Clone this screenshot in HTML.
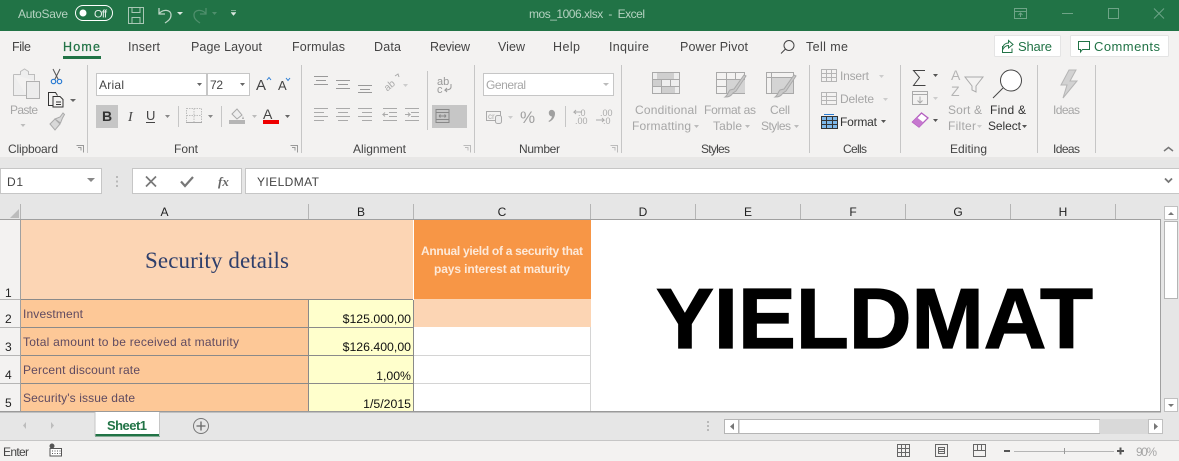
<!DOCTYPE html>
<html><head><meta charset="utf-8"><style>
html,body{margin:0;padding:0;background:#f3f2f1}
svg{display:block;font-family:"Liberation Sans",sans-serif;font-size:12px}
text{white-space:pre}
.g{fill:#a6a6a6}.d{fill:#333}.m{fill:#444}.c{text-anchor:middle}.e{text-anchor:end}
.s{fill:none;stroke:#a9a9a9;stroke-width:1}.k{fill:none;stroke:#444;stroke-width:1}
.l{fill:#b0b0b0}
.h{font-size:12px;fill:#222}
.tb{font-size:12.5px}
</style></head><body>
<svg width="1179" height="461" viewBox="0 0 1179 461" xmlns="http://www.w3.org/2000/svg">
<rect width="1179" height="461" fill="#f3f2f1"/>
<!-- title bar -->
<rect width="1179" height="31" fill="#217346"/>
<text x="18" y="18" fill="#b5d2c1" textLength="50">AutoSave</text>
<rect x="75.500" y="5.500" width="37" height="15" rx="7.500" fill="none" stroke="#fff"/>
<circle cx="83" cy="13" r="3.500" fill="#fff"/>
<text x="94" y="17.500" fill="#e6f0ea" font-size="11" textLength="13">Off</text>
<path d="M128.500 7.500h15v16h-15zM132 7.500v5h8v-5M132 23.500v-6h8v6" fill="none" stroke="#a9c8b6"/>
<path d="M159 8v6h6M159 14c3-5 12-5 12 1 0 4-3 6-6 8" fill="none" stroke="#bcd5c6" stroke-width="1.300"/>
<path d="M177 12h6l-3 3z" fill="#dbe8e0"/>
<path d="M206 8v6h-6M206 14c-3-5-12-5-12 1 0 4 3 6 6 8" fill="none" stroke="#4f8f6c" stroke-width="1.300"/>
<path d="M212 12h5l-2.500 3z" fill="#4f8f6c"/>
<path d="M231 10.500h5M231 12.500h5l-2.500 3z" fill="#dbe8e0" stroke="#dbe8e0" stroke-width=".5"/>
<text x="529" y="18" fill="#b5d2c1" textLength="116">mos_1006.xlsx  -  Excel</text>
<path d="M1014.500 8.500h12v10h-12zM1014.500 11.500h12M1020.500 17v-4M1018.500 15l2-2 2 2" fill="none" stroke="#6ea487"/>
<path d="M1062 13.500h11" stroke="#6ea487"/>
<rect x="1108.500" y="8.500" width="10" height="10" fill="none" stroke="#6ea487"/>
<path d="M1154 8.500l10 10M1164 8.500l-10 10" stroke="#6ea487"/>
<!-- tabs -->
<g class="m tb">
<text x="12" y="51" textLength="19">File</text>
<text x="128" y="51" textLength="32">Insert</text>
<text x="191" y="51" textLength="71">Page Layout</text>
<text x="292" y="51" textLength="53">Formulas</text>
<text x="374" y="51" textLength="27">Data</text>
<text x="430" y="51" textLength="40">Review</text>
<text x="498" y="51" textLength="27">View</text>
<text x="553" y="51" textLength="27">Help</text>
<text x="609" y="51" textLength="40">Inquire</text>
<text x="680" y="51" textLength="68">Power Pivot</text>
<text x="806" y="51" textLength="42">Tell me</text>
</g>
<text x="63" y="51" fill="#217346" class="tb" textLength="37" stroke="#217346" stroke-width=".25">Home</text>
<rect x="63" y="56" width="38" height="3" fill="#217346"/>
<circle cx="789" cy="45.500" r="5" fill="none" stroke="#444"/><path d="M785.500 49l-4.500 4.500" fill="none" stroke="#444"/>
<rect x="994.500" y="35.500" width="66" height="21" rx="1" fill="#fff" stroke="#e4e4e4"/>
<path d="M1002.500 46v6.500h9.500v-4M1002.500 48c1-4 4-5 6-5v-2.500l4.500 4-4.500 3.500v-2.500c-2 0-4 .5-6 4.500" fill="none" stroke="#217346"/>
<text x="1018" y="51" fill="#217346" font-size="13" textLength="34">Share</text>
<rect x="1070.500" y="35.500" width="98" height="21" rx="1" fill="#fff" stroke="#e4e4e4"/>
<path d="M1078.500 41.500h11v8h-7l-2 2.500v-2.500h-2z" fill="none" stroke="#217346"/>
<text x="1094" y="51" fill="#217346" font-size="13" textLength="66">Comments</text>
<!-- ribbon bottom -->
<rect y="157" width="1179" height="3" fill="#e8e7e6"/>
<!-- separators -->
<g fill="#c6c6c6">
<rect x="87" y="65" width="1" height="88"/><rect x="301" y="65" width="1" height="88"/>
<rect x="427" y="71" width="1" height="59"/><rect x="474" y="65" width="1" height="88"/>
<rect x="621" y="65" width="1" height="88"/><rect x="809" y="65" width="1" height="88"/>
<rect x="900" y="65" width="1" height="88"/><rect x="1037" y="65" width="1" height="88"/>
<rect x="1095" y="65" width="1" height="88"/>
<rect x="178" y="106" width="1" height="21"/><rect x="221" y="106" width="1" height="21"/><rect x="565" y="106" width="1" height="21"/>
</g>
<!-- group labels -->
<g class="m">
<text x="8" y="153" textLength="50">Clipboard</text>
<text x="174" y="153" textLength="24">Font</text>
<text x="353" y="153" textLength="53">Alignment</text>
<text x="519" y="153" textLength="41">Number</text>
<text x="701" y="153" textLength="29">Styles</text>
<text x="843" y="153" textLength="24">Cells</text>
<text x="950" y="153" textLength="37">Editing</text>
<text x="1053" y="153" textLength="27">Ideas</text>
</g>
<path d="M76.500 145.500h7v7M78 147.500h3v3" fill="none" stroke="#999"/>
<path d="M290.500 145.500h7v7M292 147.500h3v3" fill="none" stroke="#999"/>
<path d="M463.500 145.500h7v7M465 147.500h3v3" fill="none" stroke="#bbb"/>
<path d="M610.500 145.500h7v7M612 147.500h3v3" fill="none" stroke="#bbb"/>
<path d="M1164 151l4.500-3.500 4.500 3.500" fill="none" stroke="#777" stroke-width="1.500"/>
<!-- clipboard -->
<path d="M13.500 74.500h7v-3l4-2.500 4 2.500v3h6v6" fill="#eee" stroke="#bdbdbd"/>
<path d="M13.500 74.500v21h13" fill="#eee" stroke="#bdbdbd"/>
<rect x="26.500" y="81.500" width="13" height="17" fill="#ececec" stroke="#b0b0b0"/>
<text x="10" y="114" class="g" textLength="28">Paste</text>
<path d="M20.500 124h5l-2.500 3z" fill="#bdbdbd"/>
<path d="M53 69l5.500 11M60 69l-5.500 11" stroke="#555" fill="none"/>
<circle cx="53.500" cy="81.500" r="2.200" fill="none" stroke="#2b7cd3" stroke-width="1.200"/><circle cx="59.500" cy="81.500" r="2.200" fill="none" stroke="#2b7cd3" stroke-width="1.200"/>
<path d="M53 105.500h-4.500v-13h7l2 3M53 96.500h7l3 3v7.500h-10z" fill="none" stroke="#333"/>
<path d="M56 102h5M56 104.500h5" stroke="#333"/>
<path d="M70 99h6l-3 3z" fill="#666"/>
<path d="M50 124l5-5 5 5-5 6zM55 119l5-2 3-4 1.500 1.500-2 3.500-2 5z" fill="#d8d8d8" stroke="#aaa"/>
<!-- font -->
<rect x="96.500" y="73.500" width="110" height="22" fill="#fff" stroke="#c6c6c6"/>
<rect x="207.500" y="73.500" width="42" height="22" fill="#fff" stroke="#c6c6c6"/>
<text x="99" y="89" class="m" textLength="25">Arial</text>
<text x="210" y="89" class="m" textLength="13">72</text>
<path d="M197 83h5l-2.500 3zM240 83h5l-2.500 3z" fill="#666"/>
<text x="256" y="90" class="m" font-size="15">A</text><path d="M267 80l2-2.500 2 2.500" fill="none" stroke="#2b7cd3"/>
<text x="278" y="90" class="m" font-size="13">A</text><path d="M286 78l2 2.500 2-2.500" fill="none" stroke="#2b7cd3"/>
<rect x="96" y="105" width="22" height="23" fill="#c6c6c6"/>
<text x="107" y="121" class="c" fill="#333" font-weight="bold" font-size="14">B</text>
<text x="128" y="121" fill="#444" font-style="italic" font-size="14" font-family="Liberation Serif">I</text>
<text x="146" y="120" fill="#444" font-size="13">U</text><rect x="146" y="122" width="9" height="1" fill="#444"/>
<path d="M165 115h5l-2.500 3zM208 115h5l-2.500 3z" fill="#888"/><path d="M252 115h5l-2.500 3z" fill="#bbb"/><path d="M285 115h5l-2.500 3z" fill="#666"/>
<path d="M186.500 108.500h15v14h-15zM194 108.500v14M186.500 115.500h15" fill="none" stroke="#bdbdbd" stroke-dasharray="1.500 1"/>
<rect x="186" y="122" width="16" height="1" fill="#aaa"/>
<path d="M232 114l5-5 5 6-5 4z" fill="#eee" stroke="#aaa"/><path d="M243 116l1 3-2 0z" fill="#aaa"/>
<rect x="229" y="120" width="16" height="4" fill="#b5b5b5"/>
<text x="263" y="119" font-size="14" fill="#444">A</text><rect x="263" y="120" width="16" height="4" fill="#e00"/>
<!-- alignment -->
<path d="M314 76.500h14M316 80.500h10M314 84.500h14M336 80.500h14M338 84.500h10M336 88.500h14M358 85.500h14M360 89.500h10M358 92.500h14" stroke="#999"/>
<path d="M314 108.500h14M314 112.500h10M314 116.500h14M314 120.500h10M336 108.500h14M338 112.500h10M336 116.500h14M338 120.500h10M358 108.500h14M362 112.500h10M358 116.500h14M362 120.500h10M383 108.500h14M389 112.500h8M389 116.500h8M383 120.500h14M405 108.500h14M411 112.500h8M411 116.500h8M405 120.500h14" stroke="#aaa"/>
<path d="M388 114.500h-5l2-2M383 114.500l2 2M405 114.500h5l-2-2M410 114.500l-2 2" fill="none" stroke="#aaa"/>
<text x="383" y="88" font-size="10" fill="#aaa" transform="rotate(-40 390 84)">ab</text><path d="M395 76l3-2 1 3" fill="none" stroke="#aaa"/>
<path d="M403 84h5l-2.500 3z" fill="#ccc"/>
<text x="437" y="85" font-size="11" fill="#999">ab</text>
<text x="437" y="93" font-size="11" fill="#999">c</text>
<path d="M451 84v3c0 2-2 3-6 3l2-2M445 90l2 2" fill="none" stroke="#999"/>
<rect x="432" y="105" width="35" height="23" fill="#c6c6c6"/>
<path d="M436 109.500h13v13h-13zM436 112.500h13M436 119.500h13M439 116h7M439 116l1.500-1.500M439 116l1.500 1.500M446 116l-1.500-1.500M446 116l-1.500 1.500" fill="none" stroke="#888"/>
<!-- number -->
<rect x="483.500" y="73.500" width="130" height="22" fill="#fff" stroke="#c6c6c6"/>
<text x="486" y="89" class="g" textLength="40">General</text>
<path d="M603 83h6l-3 3z" fill="#bbb"/>
<path d="M486.500 111.500h14v9h-14z" fill="none" stroke="#aaa"/>
<text x="488" y="119" font-size="8" fill="#aaa">cr</text>
<rect x="495.500" y="115.500" width="6" height="8" rx="2" fill="#eee" stroke="#aaa"/>
<path d="M508 116h5l-2.500 3z" fill="#ccc"/>
<text x="520" y="123" font-size="17" fill="#a0a0a0">%</text>
<path d="M550.500 110a3.500 3.500 0 0 1 4.500 3.500c0 4-2.500 7-6 8.500l-.5-1c2-1 3.200-3 3.500-4.500a3.500 3.500 0 0 1-1.500-6.500z" fill="#a0a0a0"/>
<text x="578" y="116" font-size="9" fill="#aaa">.0</text><text x="575" y="124" font-size="9" fill="#aaa">.00</text>
<path d="M582 112h-8l2-2M574 112l2 2" fill="none" stroke="#aaa"/>
<text x="600" y="116" font-size="9" fill="#aaa">.00</text><text x="603" y="124" font-size="9" fill="#aaa">.0</text>
<path d="M596 120h8l-2-2M604 120l-2 2" fill="none" stroke="#aaa"/>
<!-- styles -->
<rect x="652.500" y="72.500" width="27" height="21" fill="#eee" stroke="#a9a9a9"/>
<path d="M652.500 79.500h27M652.500 86.500h27M661.500 72.500v21M670.500 72.500v21" stroke="#a9a9a9"/>
<rect x="657" y="73" width="17" height="6" fill="#cfcfcf"/><rect x="653" y="80" width="8" height="6" fill="#cfcfcf"/><rect x="662" y="87" width="13" height="6" fill="#cfcfcf"/>
<rect x="716.500" y="72.500" width="28" height="21" fill="#f3f2f1" stroke="#a9a9a9"/>
<path d="M716.500 79.500h28M716.500 86.500h28M726.500 72.500v21M735.500 72.500v21" stroke="#a9a9a9"/>
<rect x="727" y="80" width="18" height="13" fill="#d4d4d4"/>
<path d="M746 76l-10 15 -3 2c-2 3-4 4-8 4 3-2 3-5 5-7l4-1 10-14z" fill="#c9c9c9" stroke="#aaa"/>
<rect x="766.500" y="72.500" width="27" height="21" fill="#f3f2f1" stroke="#a9a9a9"/>
<path d="M766.500 77.500h27M771.500 72.500v21" stroke="#a9a9a9"/><rect x="772" y="78" width="21" height="15" fill="#d4d4d4"/>
<path d="M796 76l-10 15 -3 2c-2 3-4 4-8 4 3-2 3-5 5-7l4-1 10-14z" fill="#c9c9c9" stroke="#aaa"/>
<g class="g">
<text x="635" y="114" textLength="62">Conditional</text>
<text x="632" y="130" textLength="59">Formatting</text>
<text x="704" y="114" textLength="52">Format as</text>
<text x="713" y="130" textLength="29">Table</text>
<text x="770" y="114" textLength="20">Cell</text>
<text x="761" y="130" textLength="30">Styles</text>
</g>
<path d="M694 125h5l-2.500 3zM745 125h5l-2.500 3zM794 125h5l-2.500 3z" fill="#bbb"/>
<!-- cells -->
<path d="M821.500 69.500h15v12h-15zM826.500 69.500v12M831.500 69.500v12M821.500 73.500h15M821.500 77.500h15" fill="none" stroke="#b5b5b5"/>
<text x="840" y="80" class="g" textLength="29">Insert</text><path d="M879 75h5l-2.500 3z" fill="#ccc"/>
<path d="M821.500 92.500h15v12h-15zM826.500 92.500v12M821.500 96.500h15M821.500 100.500h15" fill="none" stroke="#b5b5b5"/>
<text x="840" y="103" class="g" textLength="34">Delete</text><path d="M883 98h5l-2.500 3z" fill="#ccc"/>
<rect x="822" y="117" width="15" height="11" fill="#7db8ea"/>
<path d="M821.500 116.500h16v12h-16zM826.500 116.500v12M832.500 116.500v12M821.500 120.500h16M821.500 124.500h16" fill="none" stroke="#333"/>
<path d="M824 114.500h10" stroke="#2b7cd3"/>
<text x="840" y="126" fill="#333" textLength="37">Format</text><path d="M881 120h5l-2.500 3z" fill="#555"/>
<!-- editing -->
<path d="M925 70.500h-11.500l6 7-6 8h12" fill="none" stroke="#444"/>
<path d="M933 74h5l-2.500 3z" fill="#555"/>
<path d="M912.500 91.500h15v13h-15zM912.500 94.500h15M920 96.500v6M917.500 100.500l2.500 2.500 2.500-2.500" fill="none" stroke="#aaa"/>
<path d="M933 97h5l-2.500 3z" fill="#ccc"/>
<path d="M912.500 122l9-9 6.500 5-9 9z" fill="#fff" stroke="#b45fc0" stroke-width="1.300"/><path d="M912.500 122l4.500-4.500 6.500 5-4.500 4.500z" fill="#c678cf"/>
<path d="M933 119h5l-2.500 3z" fill="#555"/>
<text x="951" y="80" font-size="14" fill="#b5b5b5">A</text><text x="951" y="96" font-size="14" fill="#b5b5b5">Z</text>
<path d="M965 77h18l-7 9v6l-4-2v-4z" fill="none" stroke="#aaa"/>
<circle cx="1011" cy="80.500" r="10.500" fill="#fff" stroke="#444"/><path d="M1003 88l-10 10" stroke="#444"/>
<text x="948" y="114" class="g" textLength="34">Sort &amp;</text>
<text x="948" y="130" class="g" textLength="28">Filter</text><path d="M977 125h5l-2.500 3z" fill="#ccc"/>
<text x="990" y="114" fill="#333" textLength="36">Find &amp;</text>
<text x="988" y="130" fill="#333" textLength="33">Select</text><path d="M1022 125h5l-2.500 3z" fill="#555"/>
<!-- ideas -->
<path d="M1069 70h7l-6 11h7l-14 17 4-13h-6z" fill="#d2d2d2" stroke="#b5b5b5"/>
<text x="1053" y="114" class="g" textLength="27">Ideas</text>
<!-- formula bar -->
<rect y="160" width="1179" height="60" fill="#e6e6e6"/>
<rect x=".5" y="168.500" width="101" height="25" fill="#fff" stroke="#c6c6c6"/>
<text x="7" y="186" class="m" textLength="16">D1</text>
<path d="M87 178h8l-4 4z" fill="#888"/>
<path d="M117 176v2M117 180.500v2M117 185v2" stroke="#aaa" stroke-width="1.500"/>
<rect x="132.500" y="168.500" width="109" height="25" fill="#fff" stroke="#c6c6c6"/>
<path d="M146 176.500l10 10M156 176.500l-10 10" stroke="#777" stroke-width="1.700"/>
<path d="M181 181.500l4 4.500 8-9" fill="none" stroke="#777" stroke-width="2.200"/>
<text x="218" y="186" font-size="13" font-style="italic" fill="#666" font-family="Liberation Serif" font-weight="bold">fx</text>
<rect x="245.500" y="168.500" width="1131" height="25" fill="#fff" stroke="#c6c6c6"/>
<text x="257" y="186" class="m" textLength="62">YIELDMAT</text>
<path d="M1165 178.500l3.500 3.500 3.500-3.500" fill="none" stroke="#777" stroke-width="1.800"/>
<!-- headers -->
<path d="M19 209v9h-9z" fill="#bcbcbc"/>
<g fill="#b5b5b5">
<rect x="20" y="204" width="1" height="16"/><rect x="308" y="204" width="1" height="16"/><rect x="413" y="204" width="1" height="16"/><rect x="590" y="204" width="1" height="16"/><rect x="695" y="204" width="1" height="16"/><rect x="800" y="204" width="1" height="16"/><rect x="905" y="204" width="1" height="16"/><rect x="1010" y="204" width="1" height="16"/><rect x="1115" y="204" width="1" height="16"/>
</g>
<g class="h c">
<text x="164.500" y="216">A</text><text x="361" y="216">B</text><text x="502" y="216">C</text><text x="643" y="216">D</text><text x="748" y="216">E</text><text x="853" y="216">F</text><text x="958" y="216">G</text><text x="1063" y="216">H</text>
</g>
<text x="5" y="297" class="h" fill="#222">1</text>
<text x="5" y="323" class="h">2</text><text x="5" y="351" class="h">3</text><text x="5" y="379" class="h">4</text><text x="5" y="407" class="h">5</text>
<!-- grid -->
<rect x="21" y="220" width="1140" height="192" fill="#fff"/>
<rect x="21" y="220" width="392" height="79" fill="#fcd5b4"/>
<rect x="414" y="220" width="177" height="79" fill="#f79646"/>
<rect x="414" y="299" width="177" height="28" fill="#fcd5b4"/>
<rect x="21" y="300" width="287" height="112" fill="#fdc897"/>
<rect x="309" y="300" width="104" height="112" fill="#ffffcc"/>
<path d="M21 299.500h392M21 327.500h392M21 355.500h392M21 383.500h392" stroke="#8a8a8a"/>
<path d="M308.500 300v112M413.500 300v112" stroke="#8a8a8a"/>
<path d="M414 355.500h177M414 383.500h177M590.500 327v85" stroke="#d4d4d4"/>
<rect y="219" width="1161" height="1" fill="#a0a0a0"/>
<rect x="20" y="219" width="1" height="193" fill="#a0a0a0"/>
<rect x="1160" y="219" width="1" height="193" fill="#a0a0a0"/>
<rect x="0" y="299" width="20" height="1" fill="#b5b5b5"/><rect x="0" y="327" width="20" height="1" fill="#b5b5b5"/><rect x="0" y="355" width="20" height="1" fill="#b5b5b5"/><rect x="0" y="383" width="20" height="1" fill="#b5b5b5"/>
<text x="145" y="268" fill="#2f3f6b" font-size="23" font-family="Liberation Serif" textLength="144">Security details</text>
<g font-size="12" font-weight="bold" fill="#fde9d9">
<text x="421" y="255" textLength="162">Annual yield of a security that</text>
<text x="434" y="273" textLength="136">pays interest at maturity</text>
</g>
<g font-size="12" fill="#5f4a60">
<text x="23" y="318" textLength="60">Investment</text>
<text x="23" y="346" textLength="216">Total amount to be received at maturity</text>
<text x="23" y="374" textLength="117">Percent discount rate</text>
<text x="23" y="402" textLength="112">Security's issue date</text>
</g>
<g font-size="12.300" fill="#111" class="e">
<text x="411" y="323">$125.000,00</text><text x="411" y="351">$126.400,00</text><text x="411" y="380">1,00%</text><text x="411" y="408">1/5/2015</text>
</g>
<text x="656" y="348" font-size="85" font-weight="bold" fill="#000" stroke="#000" stroke-width="1.200" textLength="437" lengthAdjust="spacingAndGlyphs">YIELDMAT</text>
<!-- vertical scrollbar -->
<rect x="1161" y="205" width="18" height="207" fill="#e6e6e6"/>
<rect x="1164.500" y="206.500" width="13" height="13" fill="#fff" stroke="#c0c0c0"/>
<path d="M1168 215l3-3 3 3z" fill="#777"/>
<rect x="1164.500" y="221.500" width="13" height="77" fill="#fff" stroke="#b5b5b5"/>
<rect x="1164.500" y="398.500" width="13" height="13" fill="#fff" stroke="#c0c0c0"/>
<path d="M1168 404l3 3 3-3z" fill="#777"/>
<!-- sheet tabs -->
<rect y="412" width="1179" height="28" fill="#e6e6e6"/>
<rect y="411" width="1161" height="1.500" fill="#9a9a9a"/>
<rect y="440" width="1179" height="1" fill="#c6c6c6"/>
<path d="M26 422v7l-3-3.500zM51 422v7l3-3.500z" fill="#bdbdbd"/>
<rect x="95" y="412" width="65" height="24" fill="#fff"/>
<rect x="95" y="434" width="65" height="2.500" fill="#217346"/>
<path d="M95 412v24M159.500 412v24" stroke="#c6c6c6"/>
<text x="107" y="430" fill="#217346" font-size="13" font-weight="bold" textLength="40">Sheet1</text>
<circle cx="201" cy="426" r="7.500" fill="none" stroke="#777"/><path d="M196.500 426h9M201 421.500v9" stroke="#666" stroke-width="1.300"/>
<path d="M708 421v2M708 425v2M708 429v2" stroke="#aaa" stroke-width="1.500"/>
<rect x="724.500" y="419.500" width="14" height="14" fill="#fff" stroke="#b5b5b5"/>
<path d="M734 423v7l-4-3.500z" fill="#777"/>
<rect x="739" y="419.500" width="361" height="14" fill="#fff" stroke="#b5b5b5"/>
<rect x="1100" y="419" width="48" height="15" fill="#d9d9d9"/>
<rect x="1148.500" y="419.500" width="14" height="14" fill="#fff" stroke="#c0c0c0"/>
<path d="M1154 423v7l4-3.500z" fill="#777"/>
<!-- status -->
<text x="3" y="456" class="m" textLength="26">Enter</text>
<circle cx="52" cy="446" r="2.500" fill="#555"/>
<path d="M50 448.500h11.500v7.500h-11.500z" fill="#fff" stroke="#555"/>
<path d="M52 451h1M54.500 451h1M57 451h1M59.500 451h1M52 453.500h1M54.500 453.500h1M57 453.500h1M59.500 453.500h1" stroke="#555"/>
<path d="M897.500 444.500h12v12h-12zM901.500 444.500v12M905.500 444.500v12M897.500 448.500h12M897.500 452.500h12" fill="none" stroke="#666"/>
<path d="M935.500 444.500h12v12h-12zM938.500 447.500h6v6h-6zM938.500 449.500h6M938.500 451.500h6" fill="none" stroke="#666"/>
<path d="M973.500 444.500h12v12h-12zM973.500 450.500h12M977.500 444.500v6M981.500 444.500v6" fill="none" stroke="#666"/>
<rect x="1004" y="450" width="6" height="2" fill="#555"/>
<rect x="1014" y="451" width="100" height="1" fill="#b5b5b5"/><rect x="1064" y="448" width="1" height="6" fill="#999"/>
<path d="M1117 451h7M1120.500 447.500v7" stroke="#555" stroke-width="2"/>
<text x="1136" y="456" fill="#a6a6a6" font-size="12" textLength="21">90%</text>
</svg>
</body></html>
